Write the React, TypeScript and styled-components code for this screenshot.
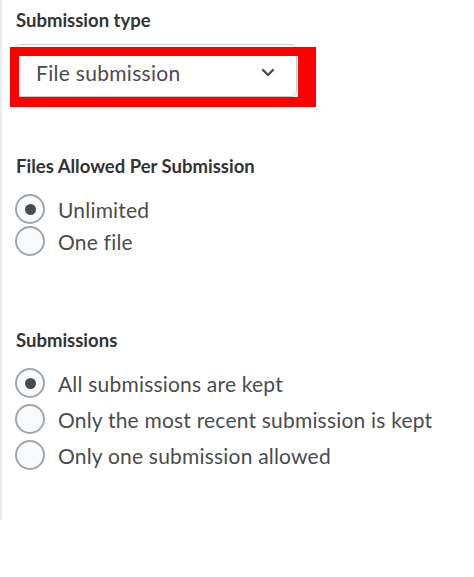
import React from "react";
import styled, { createGlobalStyle } from "styled-components";

const Global = createGlobalStyle`
  html, body { margin: 0; padding: 0; background: #ffffff; }
  body { font-family: Lato, "Open Sans", sans-serif; }
`;

const Panel = styled.div`
  box-sizing: border-box;
  width: 474px;
  height: 520px;
  border-left: 2px solid #ececec;
  padding: 8px 0 0 13px;
`;

const Heading = styled.h3<{ $top?: number }>`
  margin: ${(p) => p.$top ?? 0}px 0 0 1px;
  font-family: Lato, sans-serif;
  font-weight: 700;
  font-size: 18.5px;
  line-height: 24px;
  color: #333333;
`;

const SelectWrap = styled.div`
  position: relative;
  margin-top: 12px;
  width: 282px;
`;

const Select = styled.div`
  box-sizing: border-box;
  height: 53px;
  border: 1px solid #c9c9c9;
  border-radius: 6px;
  display: flex;
  align-items: center;
  justify-content: space-between;
  padding: 3px 21px 0 20px;
  font-size: 21px;
  letter-spacing: 0.3px;
  color: #494c4e;
  background: #fff;
`;

const Highlight = styled.div`
  position: absolute;
  left: -5px;
  top: 3px;
  width: 306px;
  height: 60px;
  box-sizing: border-box;
  border-style: solid;
  border-color: #ff0000;
  border-width: 9px 18px 10px 9px;
  pointer-events: none;
`;

const Group = styled.div<{ $gap: number; $top: number }>`
  display: flex;
  flex-direction: column;
  gap: ${(p) => p.$gap}px;
  margin-top: ${(p) => p.$top}px;
`;

const Option = styled.label`
  display: flex;
  align-items: center;
  gap: 13px;
  font-size: 21px;
  letter-spacing: 0.2px;
  color: #494c4e;
  height: 30px;
`;

const Circle = styled.span<{ $checked?: boolean }>`
  box-sizing: border-box;
  width: 30px;
  height: 30px;
  border-radius: 50%;
  border: 2px solid #a3a6a9;
  background: #f7f9fb;
  display: flex;
  align-items: center;
  justify-content: center;
  flex: none;
  &::after {
    content: "";
    display: ${(p) => (p.$checked ? "block" : "none")};
    width: 11px;
    height: 11px;
    border-radius: 50%;
    background: #494c4e;
  }
`;

const Chevron = () => (
  <svg width="14" height="9" viewBox="0 0 14 9">
    <path d="M2 2 L7 7 L12 2" fill="none" stroke="#494c4e" strokeWidth="2.4" strokeLinecap="round" strokeLinejoin="round" />
  </svg>
);

export default function App() {
  return (
    <>
      <Global />
      <Panel>
        <Heading>Submission type</Heading>
        <SelectWrap>
          <Select>
            <span>File submission</span>
            <Chevron />
          </Select>
          <Highlight />
        </SelectWrap>
        <Heading $top={57}>Files Allowed Per Submission</Heading>
        <Group $gap={2} $top={16}>
          <Option><Circle $checked />Unlimited</Option>
          <Option><Circle />One file</Option>
        </Group>
        <Heading $top={72}>Submissions</Heading>
        <Group $gap={6} $top={16}>
          <Option><Circle $checked />All submissions are kept</Option>
          <Option><Circle />Only the most recent submission is kept</Option>
          <Option><Circle />Only one submission allowed</Option>
        </Group>
      </Panel>
    </>
  );
}
